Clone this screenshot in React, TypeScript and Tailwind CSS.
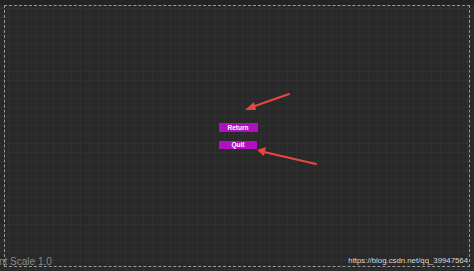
import React from "react";

function GridBackdrop() {
  return (
    <svg className="absolute inset-0" width="474" height="271">
      <defs>
        <pattern id="minor" width="9" height="9" patternUnits="userSpaceOnUse">
          <path d="M9 0 V9 M0 9 H9" stroke="#333333" strokeWidth="1" fill="none" />
        </pattern>
      </defs>
      <rect width="474" height="271" fill="url(#minor)" />
      <line x1="82.5" y1="0" x2="82.5" y2="271" stroke="#252525" />
      <rect width="474" height="5" fill="#232323" />
    </svg>
  );
}

function Arrows() {
  return (
    <svg className="absolute inset-0 pointer-events-none" width="474" height="271">
      <g stroke="#e8473f" strokeWidth="2" strokeLinecap="round" fill="#e8473f">
        <line x1="289" y1="94" x2="252" y2="107" />
        <polygon points="245,110 254,102 256,110" stroke="none" />
        <line x1="316" y1="164" x2="264" y2="152" />
        <polygon points="257,150 266,147 264,156" stroke="none" />
      </g>
    </svg>
  );
}

export default function App() {
  return (
    <div className="relative w-[474px] h-[271px] overflow-hidden bg-[#292929] font-['Liberation_Sans',Arial,sans-serif]">
      <GridBackdrop />
      <div className="relative h-full pt-[5px] pl-[4px] pr-[4px] pb-[4px]">
        <div className="h-full border border-dashed border-[#9a9a9a] flex flex-col items-center justify-center gap-[9px] pl-[2px]">
          <button className="w-[39px] h-[9px] bg-[#b010c0] text-white text-[6.5px] font-bold leading-[9px] flex items-center justify-center">
            Return
          </button>
          <button className="w-[38px] h-[8px] bg-[#b010c0] text-white text-[6.5px] font-bold leading-[8px] flex items-center justify-center">
            Quit
          </button>
        </div>
      </div>
      <Arrows />
      <div className="absolute left-0 bottom-[4px] text-[10px] leading-none text-[#8a8a8a] -ml-[1px]">
        nt Scale 1.0
      </div>
      <div className="absolute right-[6px] bottom-[6px] text-[7.8px] leading-none text-[#d8d8d8]">
        https://blog.csdn.net/qq_39947564
      </div>
    </div>
  );
}
